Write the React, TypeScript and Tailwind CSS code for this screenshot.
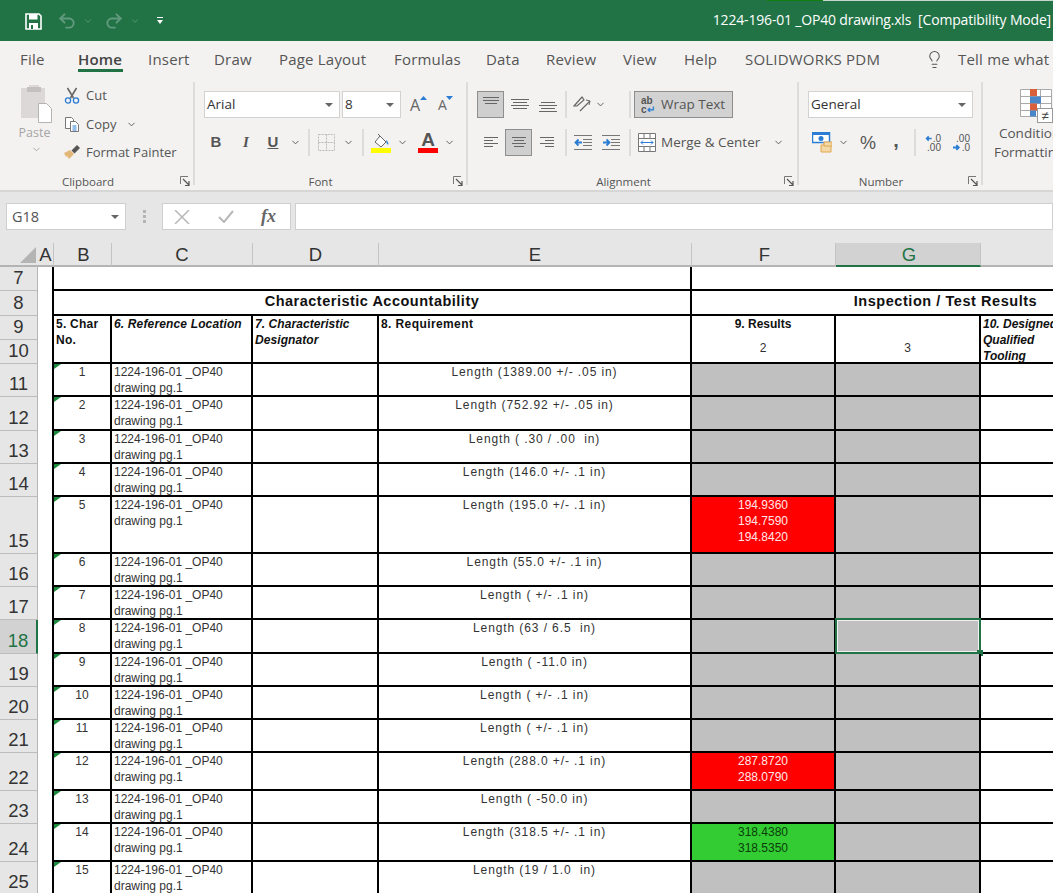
import { ChevronDown, Lightbulb, Redo2, Undo2 } from "lucide-react";
import type { ReactNode } from "react";

const uiFont = "font-['Open_Sans','Noto_Sans',sans-serif]";
const sheetFont = "font-['Liberation_Sans',Arial,sans-serif]";

// little ribbon helpers
function Chev({ className = "" }: { className?: string }) {
  return <ChevronDown size={11} strokeWidth={2} className={`shrink-0 text-[#555] ${className}`} />;
}

function Caret() {
  return (
    <svg width="8" height="4" viewBox="0 0 8 4">
      <path d="M0 0h8L4 4z" fill="#666" />
    </svg>
  );
}

function Sep({ className = "" }: { className?: string }) {
  return <div className={`w-[2px] h-[27px] bg-[#dcdcdc] ${className}`} />;
}

function Launcher() {
  return (
    <svg width="11" height="11" viewBox="0 0 11 11" className="shrink-0">
      <path d="M.5 8V.5h7.500" fill="none" stroke="#777" />
      <path d="M3 3l6 6M9 5v4.500H5" fill="none" stroke="#555" strokeWidth="1.200" />
    </svg>
  );
}

function Lines({ widths, gap = 3, color = "#666" }: { widths: number[]; gap?: number; color?: string }) {
  const max = Math.max(...widths);
  return (
    <svg width={max} height={(widths.length - 1) * gap + 2} viewBox={`0 0 ${max} ${(widths.length - 1) * gap + 2}`}>
      {widths.map((w, i) => (
        <rect key={i} x={(max - w) / 2} y={i * gap} width={w} height="1" fill={color} />
      ))}
    </svg>
  );
}

function AlignLeftIcon() {
  return (
    <svg width="14" height="14" viewBox="0 0 14 14" fill="#666">
      <rect y="1" width="14" height="1" />
      <rect y="4" width="9" height="1" />
      <rect y="7" width="14" height="1" />
      <rect y="10" width="9" height="1" />
    </svg>
  );
}

function AlignRightIcon() {
  return (
    <svg width="14" height="14" viewBox="0 0 14 14" fill="#666">
      <rect y="1" width="14" height="1" />
      <rect x="5" y="4" width="9" height="1" />
      <rect y="7" width="14" height="1" />
      <rect x="5" y="10" width="9" height="1" />
    </svg>
  );
}

function IndentIcon({ flip }: { flip?: boolean }) {
  return (
    <svg width="18" height="18" viewBox="0 0 18 18">
      <g fill="#777">
        <rect y="1" width="18" height="1" />
        <rect x="9" y="5" width="9" height="1" />
        <rect x="9" y="8" width="9" height="1" />
        <rect x="9" y="11" width="9" height="1" />
        <rect y="15" width="18" height="1" />
      </g>
      {flip ? (
        <path d="M1 8.500h6M4.500 5.500l3 3-3 3" fill="none" stroke="#2b7cd3" strokeWidth="1.800" />
      ) : (
        <path d="M8 8.500H2M4.500 5.500l-3 3 3 3" fill="none" stroke="#2b7cd3" strokeWidth="1.800" />
      )}
    </svg>
  );
}

function Group({ label, className, labelCls, children }: { label: string; className: string; labelCls: string; children: ReactNode }) {
  return (
    <div className={`h-[103px] shrink-0 flex flex-col border-r-2 border-[#dcdcdc] ${className}`}>
      <div className="h-[95px] flex flex-col">{children}</div>
      <div className="h-[8px] flex items-center pr-[2px]">
        <div className={`flex-1 text-center text-[11.500px] leading-[13px] text-[#555] ${labelCls}`}>{label}</div>
        <Launcher />
      </div>
    </div>
  );
}

function Combo({ text, className }: { text: string; className: string }) {
  return (
    <div className={`h-[27px] bg-white border border-[#d2d2d2] flex items-center justify-between pl-[2px] pr-[6px] text-[13.500px] text-[#333] ${className}`}>
      <span>{text}</span>
      <Caret />
    </div>
  );
}

function TitleBar() {
  return (
    <div className={`bg-[#217346] text-white ${uiFont}`}>
      <div className="h-[1px] flex">
        <div className="ml-[767px] w-[56px] bg-[#0f7f0f]" />
        <div className="flex-1 bg-[#c8d5cc]" />
      </div>
      <div className="h-[40px] flex items-center">
        <svg width="17" height="17" viewBox="0 0 17 17" className="ml-[25px]">
          <path d="M1 1h13l2 2v13H1z" fill="none" stroke="#fff" strokeWidth="1.600" />
          <rect x="4" y="1" width="8.500" height="5.500" fill="#fff" />
          <rect x="4" y="10" width="9" height="6" fill="#fff" />
          <rect x="6" y="12" width="2" height="4" fill="#217346" />
        </svg>
        <Undo2 size={20} strokeWidth={2.2} className="ml-[15px] text-[#639a7e]" />
        <ChevronDown size={10} strokeWidth={2} className="ml-[6px] text-[#639a7e]" />
        <Redo2 size={20} strokeWidth={2.2} className="ml-[11px] text-[#639a7e]" />
        <ChevronDown size={10} strokeWidth={2} className="ml-[6px] text-[#639a7e]" />
        <svg width="6" height="8" viewBox="0 0 6 8" className="ml-[17px]">
          <path d="M0 0h6v1H0zM0 3h6L3 7z" fill="#fff" />
        </svg>
        <div className="ml-auto pr-[2px] pb-[3px] text-[14px] tracking-[-0.18px] whitespace-pre">1224-196-01 _OP40 drawing.xls  [Compatibility Mode]</div>
      </div>
    </div>
  );
}

const tabs = [
  { label: "File", cls: "w-[23px] ml-[20px]" },
  { label: "Home", cls: "w-[45px] ml-[35px] font-semibold text-[#444]" },
  { label: "Insert", cls: "w-[41px] ml-[25px]" },
  { label: "Draw", cls: "w-[39px] ml-[25px]" },
  { label: "Page Layout", cls: "w-[88px] ml-[26px]" },
  { label: "Formulas", cls: "w-[65px] ml-[27px]" },
  { label: "Data", cls: "w-[33px] ml-[27px]" },
  { label: "Review", cls: "w-[50px] ml-[27px]" },
  { label: "View", cls: "w-[35px] ml-[27px]" },
  { label: "Help", cls: "w-[33px] ml-[26px]" },
  { label: "SOLIDWORKS PDM", cls: "w-[139px] ml-[28px]" },
];

function Tabs() {
  return (
    <div className="h-[37px] flex items-center pb-[1px] text-[15px] tracking-[0.2px] text-[#555] overflow-hidden">
      {tabs.map((t) => (
        <div key={t.label} className={`relative shrink-0 whitespace-nowrap ${t.cls}`}>
          {t.label}
          {t.label === "Home" && <div className="absolute left-0 right-0 top-[21px] h-[3px] bg-[#217346]" />}
        </div>
      ))}
      <Lightbulb size={19} strokeWidth={1.300} className="ml-[41px] shrink-0 text-[#555]" />
      <div className="ml-[14px] whitespace-nowrap">Tell me what you want to do</div>
    </div>
  );
}

function ClipboardGroup() {
  return (
    <Group label="Clipboard" labelCls="pr-[22px]" className="w-[195px] pl-[18px]">
      <div className="flex">
        <div className="w-[36px] flex flex-col items-center pt-[3px]">
          <svg width="34" height="38" viewBox="0 0 34 38">
            <path d="M2 3h8V0h10v3h6v30H2z" fill="#dcd8d8" />
            <rect x="8" y="2" width="14" height="5" fill="#c4c0c0" />
            <path d="M19.500 18.500h8l5 5v14h-13z" fill="#fff" stroke="#b4b4b4" />
          </svg>
          <div className="text-[12.500px] leading-[18px] mt-[1px] -ml-[3px] text-[#a6a6a6]">Paste</div>
          <ChevronDown size={11} strokeWidth={2} className="mt-[2px] text-[#a6a6a6]" />
        </div>
        <div className="ml-[10px] pt-[4px] text-[13px] text-[#555] leading-[18px]">
          <div className="flex items-center h-[18px] mb-[11px]">
            <svg width="16" height="17" viewBox="0 0 16 17" className="mr-[6px]">
              <path d="M3.500 1l6 10M12.500 1l-6 10" fill="none" stroke="#666" strokeWidth="1.600" />
              <circle cx="4" cy="13.500" r="2.600" fill="none" stroke="#2b7cd3" strokeWidth="1.300" />
              <circle cx="12" cy="13.500" r="2.600" fill="none" stroke="#2b7cd3" strokeWidth="1.300" />
            </svg>
            Cut
          </div>
          <div className="flex items-center h-[18px] mb-[10px]">
            <svg width="16" height="17" viewBox="0 0 16 17" className="mr-[6px]">
              <path d="M1.500 1.500h6l2 2v9h-8z" fill="#fff" stroke="#777" />
              <path d="M6.500 5.500h5l3 3v7h-8z" fill="#fff" stroke="#777" />
              <path d="M8.500 10h4M8.500 12h4M8.500 14h4" stroke="#2b7cd3" />
            </svg>
            Copy
            <Chev className="ml-[10px]" />
          </div>
          <div className="flex items-center h-[18px]">
            <svg width="16" height="15" viewBox="0 0 16 15" className="mr-[6px]">
              <path d="M0 8l6-3 4 4-5 5-2-3-1 1z" fill="#e3b778" />
              <path d="M7.500 5.500L13 0l3 3-5.500 5.500z" fill="#555" />
            </svg>
            Format Painter
          </div>
        </div>
      </div>
    </Group>
  );
}

function FontGroup() {
  return (
    <Group label="Font" labelCls="pr-[16px]" className="w-[273px] pl-[9px]">
      <div className="flex items-center mt-[9px]">
        <Combo text="Arial" className="w-[136px]" />
        <Combo text="8" className="w-[59px] ml-[2px]" />
        <div className="relative ml-[9px] w-[16px] text-[16px] text-[#666] leading-[20px]">
          A<svg width="7" height="4" viewBox="0 0 7 4" className="absolute -right-[1px] top-[1px]"><path d="M0 4l3.500-4L7 4z" fill="#2b7cd3" /></svg>
        </div>
        <div className="relative ml-[12px] w-[14px] text-[14px] text-[#666] leading-[20px]">
          A<svg width="7" height="4" viewBox="0 0 7 4" className="absolute -right-[1px] top-[1px]"><path d="M0 0l3.500 4L7 0z" fill="#2b7cd3" /></svg>
        </div>
      </div>
      <div className="flex items-center h-[27px] mt-[11px] text-[#555]">
        <div className={`w-[24px] text-center text-[15px] font-bold ${sheetFont}`}>B</div>
        <div className="w-[36px] text-center text-[15px] font-bold italic font-['Liberation_Serif',serif]">I</div>
        <div className={`w-[18px] text-center text-[15px] font-bold underline ${sheetFont}`}>U</div>
        <div className="w-[26px] flex justify-center"><Chev /></div>
        <Sep />
        <div className="w-[32px] flex justify-center">
          <svg width="17" height="17" viewBox="0 0 17 17">
            <path d="M.5.500h16v16H.5zM8.500.500v16M.5 8.500h16" fill="none" stroke="#bbb" strokeDasharray="2 1" />
          </svg>
        </div>
        <div className="w-[12px] flex justify-center"><Chev /></div>
        <div className="w-[8px]" />
        <Sep />
        <div className="w-[34px] flex justify-center">
          <svg width="20" height="20" viewBox="0 0 20 20">
            <path d="M4 9l5-6 6 6-5 5z" fill="#fff" stroke="#666" />
            <path d="M7 1l3 3" stroke="#666" />
            <path d="M15 7c2 2 3 3 2 5-1-1-2-3-2-5z" fill="#2b7cd3" />
            <rect y="15" width="20" height="5" fill="#ffff00" />
          </svg>
        </div>
        <div className="w-[8px] flex justify-center"><Chev /></div>
        <div className="w-[12px]" />
        <div className="w-[20px] flex flex-col items-center">
          <div className={`text-[19px] leading-[16px] font-bold text-[#555] ${sheetFont}`}>A</div>
          <div className="w-[20px] h-[5px] bg-[#ff0000]" />
        </div>
        <div className="w-[5px]" />
        <div className="w-[12px] flex justify-center"><Chev /></div>
      </div>
    </Group>
  );
}

function AlignmentGroup() {
  return (
    <Group label="Alignment" labelCls="pr-[14px]" className="w-[331px] pl-[9px]">
      <div className="flex items-center mt-[9px] h-[27px]">
        <div className="w-[27px] h-[27px] bg-[#cfcfcf] border border-[#8e8e8e] flex items-start justify-center pt-[5px]">
          <Lines widths={[16, 16, 12]} />
        </div>
        <div className="w-[31px] flex justify-center"><Lines widths={[18, 14, 18, 14]} /></div>
        <div className="w-[25px] flex justify-center pt-[6px]"><Lines widths={[14, 18, 14, 18]} /></div>
        <Sep className="ml-[5px]" />
        <svg width="19" height="19" viewBox="0 0 19 19" className="ml-[6px]">
          <path d="M1 11l8-9 2 3-7 6zM7 16L17 6" fill="none" stroke="#666" strokeWidth="1.200" />
          <path d="M13 5l4 1-1 4" fill="none" stroke="#666" />
        </svg>
        <Chev className="ml-[3px]" />
        <div className="w-[23px]" />
        <Sep />
        <div className="ml-[3px] w-[99px] h-[27px] bg-[#d2d2d2] border border-[#8e8e8e] flex items-center pl-[6px] text-[13.500px] text-[#555]">
          <div className={`w-[16px] text-[10px] leading-[9px] font-bold text-[#555] ${sheetFont}`}>
            ab<br />c<span className="text-[#2b7cd3]">↵</span>
          </div>
          <span className="ml-[4px] whitespace-nowrap">Wrap Text</span>
        </div>
      </div>
      <div className="flex items-center mt-[11px] h-[27px]">
        <div className="w-[28px] flex justify-center"><AlignLeftIcon /></div>
        <div className="w-[27px] h-[27px] bg-[#cfcfcf] border border-[#8e8e8e] flex items-center justify-center">
          <Lines widths={[14, 10, 14, 10]} />
        </div>
        <div className="w-[30px] flex justify-center"><AlignRightIcon /></div>
        <Sep className="ml-[3px]" />
        <div className="ml-[7px]"><IndentIcon /></div>
        <div className="ml-[10px]"><IndentIcon flip /></div>
        <div className="w-[9px]" />
        <Sep />
        <svg width="18" height="19" viewBox="0 0 18 19" className="ml-[7px]">
          <path d="M.5.500h17v18H.5zM.5 5.500h17M.5 13.500h17M6 .500v5M12 .500v5M6 13.500v5M12 13.500v5" fill="#fff" stroke="#777" />
          <path d="M3 9.500h12M5 7.500l-2 2 2 2M13 7.500l2 2-2 2" fill="none" stroke="#2b7cd3" />
        </svg>
        <span className="ml-[5px] text-[13.500px] text-[#555] whitespace-nowrap w-[101px]">Merge &amp; Center</span>
        <Chev className="ml-[11px]" />
      </div>
    </Group>
  );
}

function NumberGroup() {
  return (
    <Group label="Number" labelCls="pr-[14px]" className="w-[184px] pl-[9px]">
      <Combo text="General" className="w-[165px] mt-[9px]" />
      <div className="flex items-center mt-[11px] h-[27px] text-[#555]">
        <svg width="20" height="21" viewBox="0 0 20 21" className="ml-[4px]">
          <rect x=".5" y=".5" width="17" height="10" fill="#fff" stroke="#2b7cd3" strokeWidth="1.500" />
          <rect x="0" y="0" width="18" height="3" fill="#2b7cd3" />
          <circle cx="9" cy="6.500" r="2.500" fill="#2b7cd3" />
          <path d="M9 13h10v7H9z" fill="#f3d9a8" stroke="#e2a64e" />
          <path d="M12 10h8v4h-8z" fill="#f3d9a8" stroke="#e2a64e" />
        </svg>
        <Chev className="ml-[6px]" />
        <div className={`ml-[11px] w-[16px] text-center text-[18px] leading-[20px] ${sheetFont}`}>%</div>
        <div className={`ml-[10px] w-[20px] text-center text-[20px] leading-[12px] font-bold pb-[6px] ${sheetFont}`}>,</div>
        <Sep className="ml-[8px]" />
        <div className={`ml-[9px] w-[16px] text-[10px] leading-[9px] text-[#555] ${sheetFont}`}>
          <div className="flex items-center justify-end">
            <svg width="8" height="7" viewBox="0 0 8 7" className="mr-[1px]"><path d="M8 3.500H2M4.500 1L2 3.500 4.500 6" fill="none" stroke="#2b7cd3" strokeWidth="2" /></svg>
            .0
          </div>
          <div className="text-right">.00</div>
        </div>
        <div className={`ml-[12px] w-[17px] text-[10px] leading-[9px] text-[#555] ${sheetFont}`}>
          <div className="text-right">.00</div>
          <div className="flex items-center justify-end">
            <svg width="8" height="7" viewBox="0 0 8 7" className="mr-[1px]"><path d="M0 3.500h6M3.500 1L6 3.500 3.500 6" fill="none" stroke="#2b7cd3" strokeWidth="2" /></svg>
            .0
          </div>
        </div>
      </div>
    </Group>
  );
}

function CondFormat() {
  return (
    <div className="pl-[16px] w-[90px] shrink-0 text-[13.500px] leading-[19px] text-[#555]">
      <div className="pl-[21px] h-[42px] pt-[7px]">
        <svg width="33" height="34" viewBox="0 0 33 34">
          <path d="M.5.500h31v27H.5zM.5 7.500h31M.5 14.500h31M.5 21.500h31M10.500.500v27M20.500.500v27" fill="#fff" stroke="#aaa" />
          <rect x="10" y="0" width="7" height="7" fill="#d9603b" />
          <rect x="10" y="7.500" width="11" height="7" fill="#4a86c8" />
          <rect x="10" y="14.500" width="7" height="7" fill="#d9603b" />
          <rect x="10" y="21.500" width="6" height="6" fill="#4a86c8" />
          <rect x="17.500" y="19.500" width="15" height="14" fill="#fff" stroke="#999" />
          <text x="25" y="31" textAnchor="middle" fontSize="13" fill="#444" fontFamily="Liberation Sans">≠</text>
        </svg>
      </div>
      <div className="whitespace-nowrap">Conditional</div>
      <div className="-ml-[5px] whitespace-nowrap">Formatting</div>
    </div>
  );
}

function Ribbon() {
  return (
    <div className={`bg-[#f3f2f1] border-b-2 border-[#d6d6d6] ${uiFont} overflow-hidden`}>
      <Tabs />
      <div className="h-[112px] pt-[4px] flex">
        <ClipboardGroup />
        <FontGroup />
        <AlignmentGroup />
        <NumberGroup />
        <CondFormat />
      </div>
    </div>
  );
}

function FormulaBar() {
  return (
    <div className={`h-[51px] bg-[#e6e6e6] flex pt-[11px] ${uiFont}`}>
      <div className="ml-[6px] w-[120px] h-[27px] bg-white border border-[#cfcfcf] flex items-center justify-between pl-[5px] pr-[6px] text-[14.500px] text-[#555]">
        <span>G18</span>
        <Caret />
      </div>
      <div className="w-[36px] h-[27px] flex flex-col items-center justify-center gap-[2px]">
        <div className="w-[3px] h-[3px] bg-[#b4b4b4]" />
        <div className="w-[3px] h-[3px] bg-[#b4b4b4]" />
        <div className="w-[3px] h-[3px] bg-[#b4b4b4]" />
      </div>
      <div className="w-[129px] h-[27px] bg-white border border-[#cfcfcf] flex items-center">
        <svg width="16" height="14" viewBox="0 0 16 14" className="ml-[11px]">
          <path d="M1 0l14 14M15 0L1 14" stroke="#b8b8b8" strokeWidth="1.500" />
        </svg>
        <svg width="16" height="13" viewBox="0 0 16 13" className="ml-[28px]">
          <path d="M1 7l5 5L15 1" fill="none" stroke="#b8b8b8" strokeWidth="2" />
        </svg>
        <span className="ml-[27px] text-[18px] italic font-bold text-[#666] font-['Liberation_Serif',serif]">fx</span>
      </div>
      <div className="ml-[4px] flex-1 h-[27px] bg-white border border-[#cfcfcf]" />
    </div>
  );
}

type Row = { n: number; req: string; h: string; vals?: string[]; color?: "red" | "green" };

const rows: Row[] = [
  { n: 1, req: "Length (1389.00 +/- .05 in)", h: "11" },
  { n: 2, req: "Length (752.92 +/- .05 in)", h: "12" },
  { n: 3, req: "Length ( .30 / .00  in)", h: "13" },
  { n: 4, req: "Length (146.0 +/- .1 in)", h: "14" },
  { n: 5, req: "Length (195.0 +/- .1 in)", h: "15", vals: ["194.9360", "194.7590", "194.8420"], color: "red" },
  { n: 6, req: "Length (55.0 +/- .1 in)", h: "16" },
  { n: 7, req: "Length ( +/- .1 in)", h: "17" },
  { n: 8, req: "Length (63 / 6.5  in)", h: "18" },
  { n: 9, req: "Length ( -11.0 in)", h: "19" },
  { n: 10, req: "Length ( +/- .1 in)", h: "20" },
  { n: 11, req: "Length ( +/- .1 in)", h: "21" },
  { n: 12, req: "Length (288.0 +/- .1 in)", h: "22", vals: ["287.8720", "288.0790"], color: "red" },
  { n: 13, req: "Length ( -50.0 in)", h: "23" },
  { n: 14, req: "Length (318.5 +/- .1 in)", h: "24", vals: ["318.4380", "318.5350"], color: "green" },
  { n: 15, req: "Length (19 / 1.0  in)", h: "25" },
];

const colHeaders = ["A", "B", "C", "D", "E", "F", "G", "H"];

function RowHead({ label, active }: { label: string; active?: boolean }) {
  return (
    <div
      className={`flex items-end justify-center pb-[2px] text-[18.500px] leading-[21px] border-b border-[#bdbdbd] ${
        active ? "bg-[#d2d2d2] text-[#217346] border-r-2 border-r-[#217346]" : "bg-[#e6e6e6] text-[#333] border-r border-r-[#b4b4b4]"
      }`}
    >
      {label}
    </div>
  );
}

const line = "border-r-2 border-b-2 border-black";

function Sheet() {
  return (
    <div className={`overflow-hidden bg-white ${sheetFont} text-[12px] leading-[16px] text-[#333]`}>
      <div className="w-[1199px] grid grid-cols-[38px_16px_58px_141px_126px_313px_144px_145px_218px] grid-rows-[24px_24px_25px_24px_24px_33px_34px_33px_33px_57px_33px_33px_34px_33px_33px_33px_38px_33px_38px_33px]">
        {/* column headers */}
        <div className="bg-[#e6e6e6] border-b-2 border-[#b4b4b4] flex items-end justify-end pr-[2px] pb-[2px]">
          <svg width="16" height="16" viewBox="0 0 16 16">
            <path d="M16 0v16H0z" fill="#b4b4b4" />
          </svg>
        </div>
        {colHeaders.map((c) => (
          <div
            key={c}
            className={`flex items-center justify-center text-[18.500px] leading-[21px] border-r border-[#c4c4c4] border-b-2 ${
              c === "G" ? "bg-[#d2d2d2] text-[#217346] border-b-[#217346]" : "bg-[#e6e6e6] text-[#333] border-b-[#b4b4b4]"
            } ${c === "B" || c === "F" || c === "G" ? "pl-[2px]" : ""}`}
          >
            {c}
          </div>
        ))}

        {/* row 7 */}
        <RowHead label="7" />
        <div className="border-r-2 border-black" />
        <div className={`col-span-4 ${line}`} />
        <div className="col-span-3 border-b-2 border-black" />

        {/* row 8 */}
        <RowHead label="8" />
        <div className="border-r-2 border-black" />
        <div className={`col-span-4 flex items-center justify-center pb-[3px] text-[14.500px] tracking-[0.5px] font-bold text-[#111] ${line}`}>
          Characteristic Accountability
        </div>
        <div className="col-span-3 flex items-center justify-center pb-[3px] text-[14.500px] tracking-[0.55px] font-bold text-[#111] border-b-2 border-black">
          Inspection / Test Results
        </div>

        {/* rows 9 and 10, the data columns are merged across both */}
        <RowHead label="9" />
        <div className="border-r-2 border-black" />
        <div className={`row-span-2 pl-[2px] font-bold tracking-[0.25px] text-[#111] ${line}`}>5. Char<br />No.</div>
        <div className={`row-span-2 pl-[2px] font-bold italic tracking-[0.15px] text-[#111] ${line}`}>6. Reference Location</div>
        <div className={`row-span-2 pl-[2px] font-bold italic tracking-[0.07px] text-[#111] ${line}`}>7. Characteristic<br />Designator</div>
        <div className={`row-span-2 pl-[2px] font-bold tracking-[0.4px] text-[#111] ${line}`}>8. Requirement</div>
        <div className={`row-span-2 text-center ${line}`}>
          <div className="h-[24px] font-bold text-[#111]">9. Results</div>
          <div>2</div>
        </div>
        <div className={`row-span-2 text-center pt-[24px] ${line}`}>3</div>
        <div className="row-span-2 pl-[2px] font-bold italic text-[#111] border-b-2 border-black overflow-hidden">10. Designed<br />Qualified<br />Tooling</div>
        <RowHead label="10" />
        <div className="border-r-2 border-black" />

        {rows.map((r) => (
          <SheetRow key={r.n} row={r} />
        ))}
      </div>
    </div>
  );
}

function SheetRow({ row }: { row: Row }) {
  const selected = row.h === "18";
  const fill =
    row.color === "red" ? "bg-[#ff0000] text-[#ffe6e6]" : row.color === "green" ? "bg-[#33cc33] text-[#0a3d0a]" : "bg-[#c0c0c0]";
  return (
    <>
      <RowHead label={row.h} active={selected} />
      <div className="border-r-2 border-black" />
      <div className={`relative text-center ${line}`}>
        <svg width="7" height="5" viewBox="0 0 7 5" className="absolute left-0 top-0">
          <path d="M0 0h7L0 5z" fill="#1e8a3c" />
        </svg>
        {row.n}
      </div>
      <div className={`pl-[2px] whitespace-pre overflow-hidden ${line}`}>1224-196-01 _OP40{"\n"}drawing pg.1</div>
      <div className={line} />
      <div className={`text-center whitespace-pre tracking-[0.9px] ${line}`}>{row.req}</div>
      <div className={`text-center ${fill} ${line}`}>
        {row.vals?.map((v) => <div key={v}>{v}</div>)}
      </div>
      <div className={`relative bg-[#c0c0c0] ${line}`}>
        {selected && (
          <div className="absolute -left-[1px] -top-[2px] -right-[2px] -bottom-[2px] border-2 border-[#217346]">
            <div className="h-full border border-[#f0f0f0]" />
            <div className="absolute -right-[4px] -bottom-[4px] w-[6px] h-[6px] bg-[#217346]" />
          </div>
        )}
      </div>
      <div className="border-b-2 border-black" />
    </>
  );
}

export default function App() {
  return (
    <div className="w-[1053px] h-[893px] overflow-hidden bg-white">
      <TitleBar />
      <Ribbon />
      <FormulaBar />
      <Sheet />
    </div>
  );
}
